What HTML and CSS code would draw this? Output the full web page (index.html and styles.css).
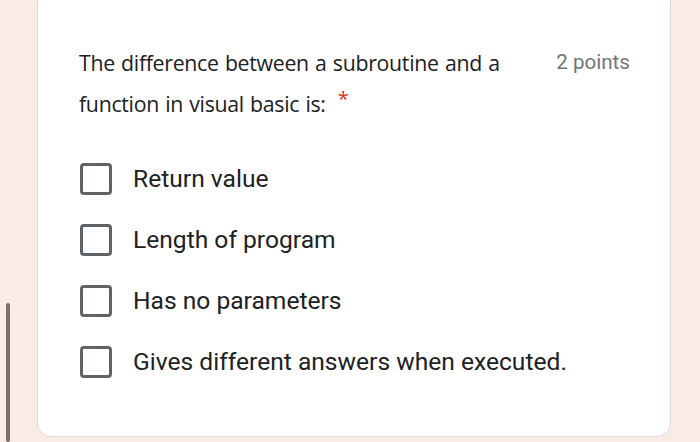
FILE: index.html
```html
<!DOCTYPE html>
<html>
<head>
<meta charset="utf-8">
<link rel="stylesheet" href="styles.css">
</head>
<body>
<div class="scrollbar"></div>
<div class="card">
  <div class="header">
    <div class="question">The difference between a subroutine and a function in visual basic is:<span class="req">*</span></div>
    <div class="points">2 points</div>
  </div>
  <div class="options">
    <label class="option"><span class="box"></span><span class="label">Return value</span></label>
    <label class="option"><span class="box"></span><span class="label">Length of program</span></label>
    <label class="option"><span class="box"></span><span class="label">Has no parameters</span></label>
    <label class="option"><span class="box"></span><span class="label">Gives different answers when executed.</span></label>
  </div>
</div>
</body>
</html>
```
FILE: styles.css
```css
html, body {
  margin: 0;
  padding: 0;
  width: 700px;
  height: 442px;
  overflow: hidden;
  background: #f9ece6;
}
body {
  font-family: Roboto, "Liberation Sans", sans-serif;
}
.scrollbar {
  position: absolute;
  left: 6px;
  top: 303px;
  width: 4px;
  height: 139px;
  background: #7b706c;
  border-radius: 2px;
}
.card {
  box-sizing: border-box;
  margin: -12px 0 0 37px;
  width: 634px;
  height: 449px;
  background: #fff;
  border: 1px solid #e3d9d6;
  border-radius: 14px;
  padding: 53px 40px 0 41px;
}
.header {
  display: flex;
  justify-content: space-between;
  align-items: flex-start;
}
.question {
  width: 440px;
  font-family: "Open Sans", sans-serif;
  font-size: 21.3px;
  line-height: 41px;
  color: #202124;
  letter-spacing: -0.3px;
  word-spacing: 1px;
}
.req {
  display: inline-block;
  color: #d93025;
  margin-left: 12px;
  font-size: 20px;
  line-height: 20px;
  vertical-align: 6px;
}
.points {
  font-size: 20.6px;
  line-height: 41px;
  color: #70757a;
}
.options {
  display: flex;
  flex-direction: column;
  margin-top: 24px;
}
.option {
  display: flex;
  align-items: center;
  height: 61px;
}
.box {
  box-sizing: border-box;
  width: 32px;
  height: 32px;
  border: 3px solid #5f6368;
  border-radius: 4px;
  margin-left: 1px;
}
.label {
  margin-left: 21px;
  font-size: 24.6px;
  color: #202124;
}
```
